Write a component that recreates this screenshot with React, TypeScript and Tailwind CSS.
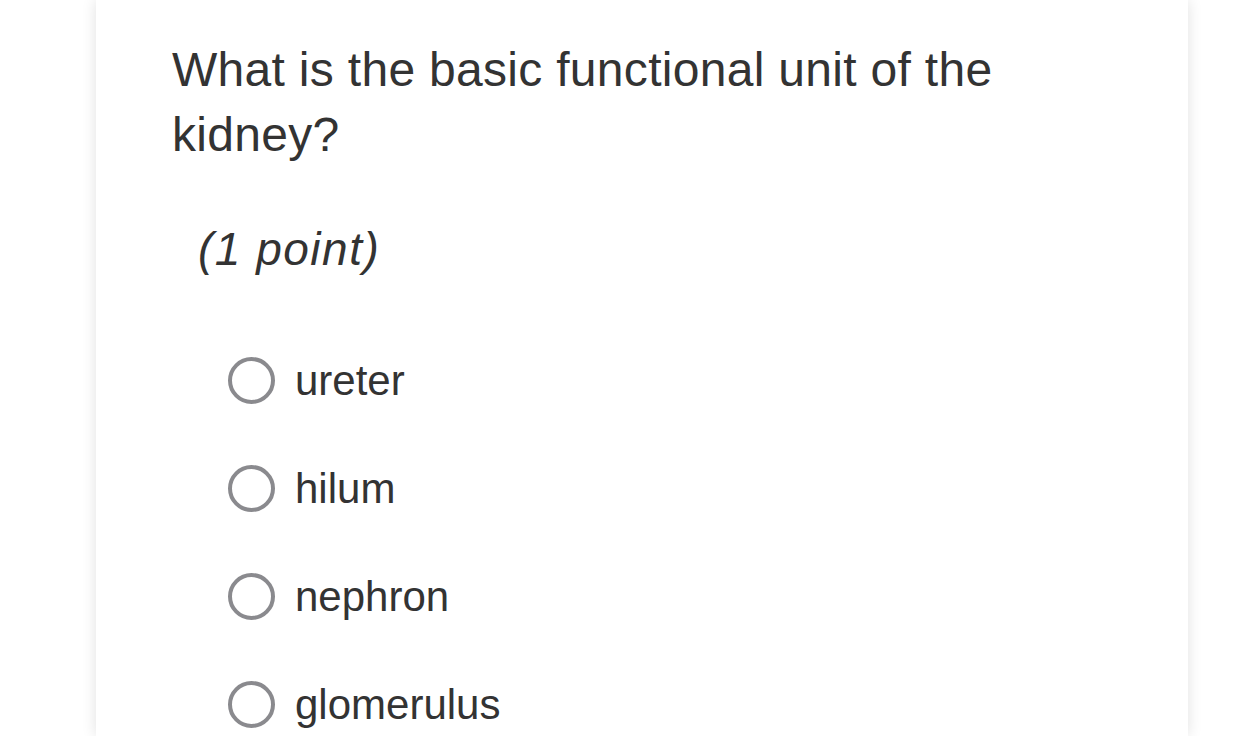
import React from "react";

const options = ["ureter", "hilum", "nephron", "glomerulus"];

export default function App() {
  return (
    <div
      className="w-[1243px] h-[736px] overflow-hidden bg-white"
      style={{ fontFamily: '"Liberation Sans", Arial, sans-serif' }}
    >
      <div className="ml-[96px] w-[1092px] h-[736px] bg-white shadow-[0_0_14px_rgba(0,0,0,0.12)] pl-[76px] pt-[37px] text-[#333333]">
        <div className="text-[48px] leading-[65px] tracking-[0.3px] w-[880px]">
          What is the basic functional unit of the kidney?
        </div>
        <div className="mt-[52px] ml-[26px] text-[46px] italic leading-[60px] tracking-[1.5px]">(1 point)</div>
        <div className="mt-[77px] ml-[56px] flex flex-col gap-[60px]">
          {options.map((o) => (
            <div key={o} className="flex items-center h-[48px]">
              <div className="w-[47px] h-[47px] rounded-full border-[4px] border-[#8a8a8e] shrink-0" />
              <span className="ml-[20px] text-[42px]">{o}</span>
            </div>
          ))}
        </div>
      </div>
    </div>
  );
}
